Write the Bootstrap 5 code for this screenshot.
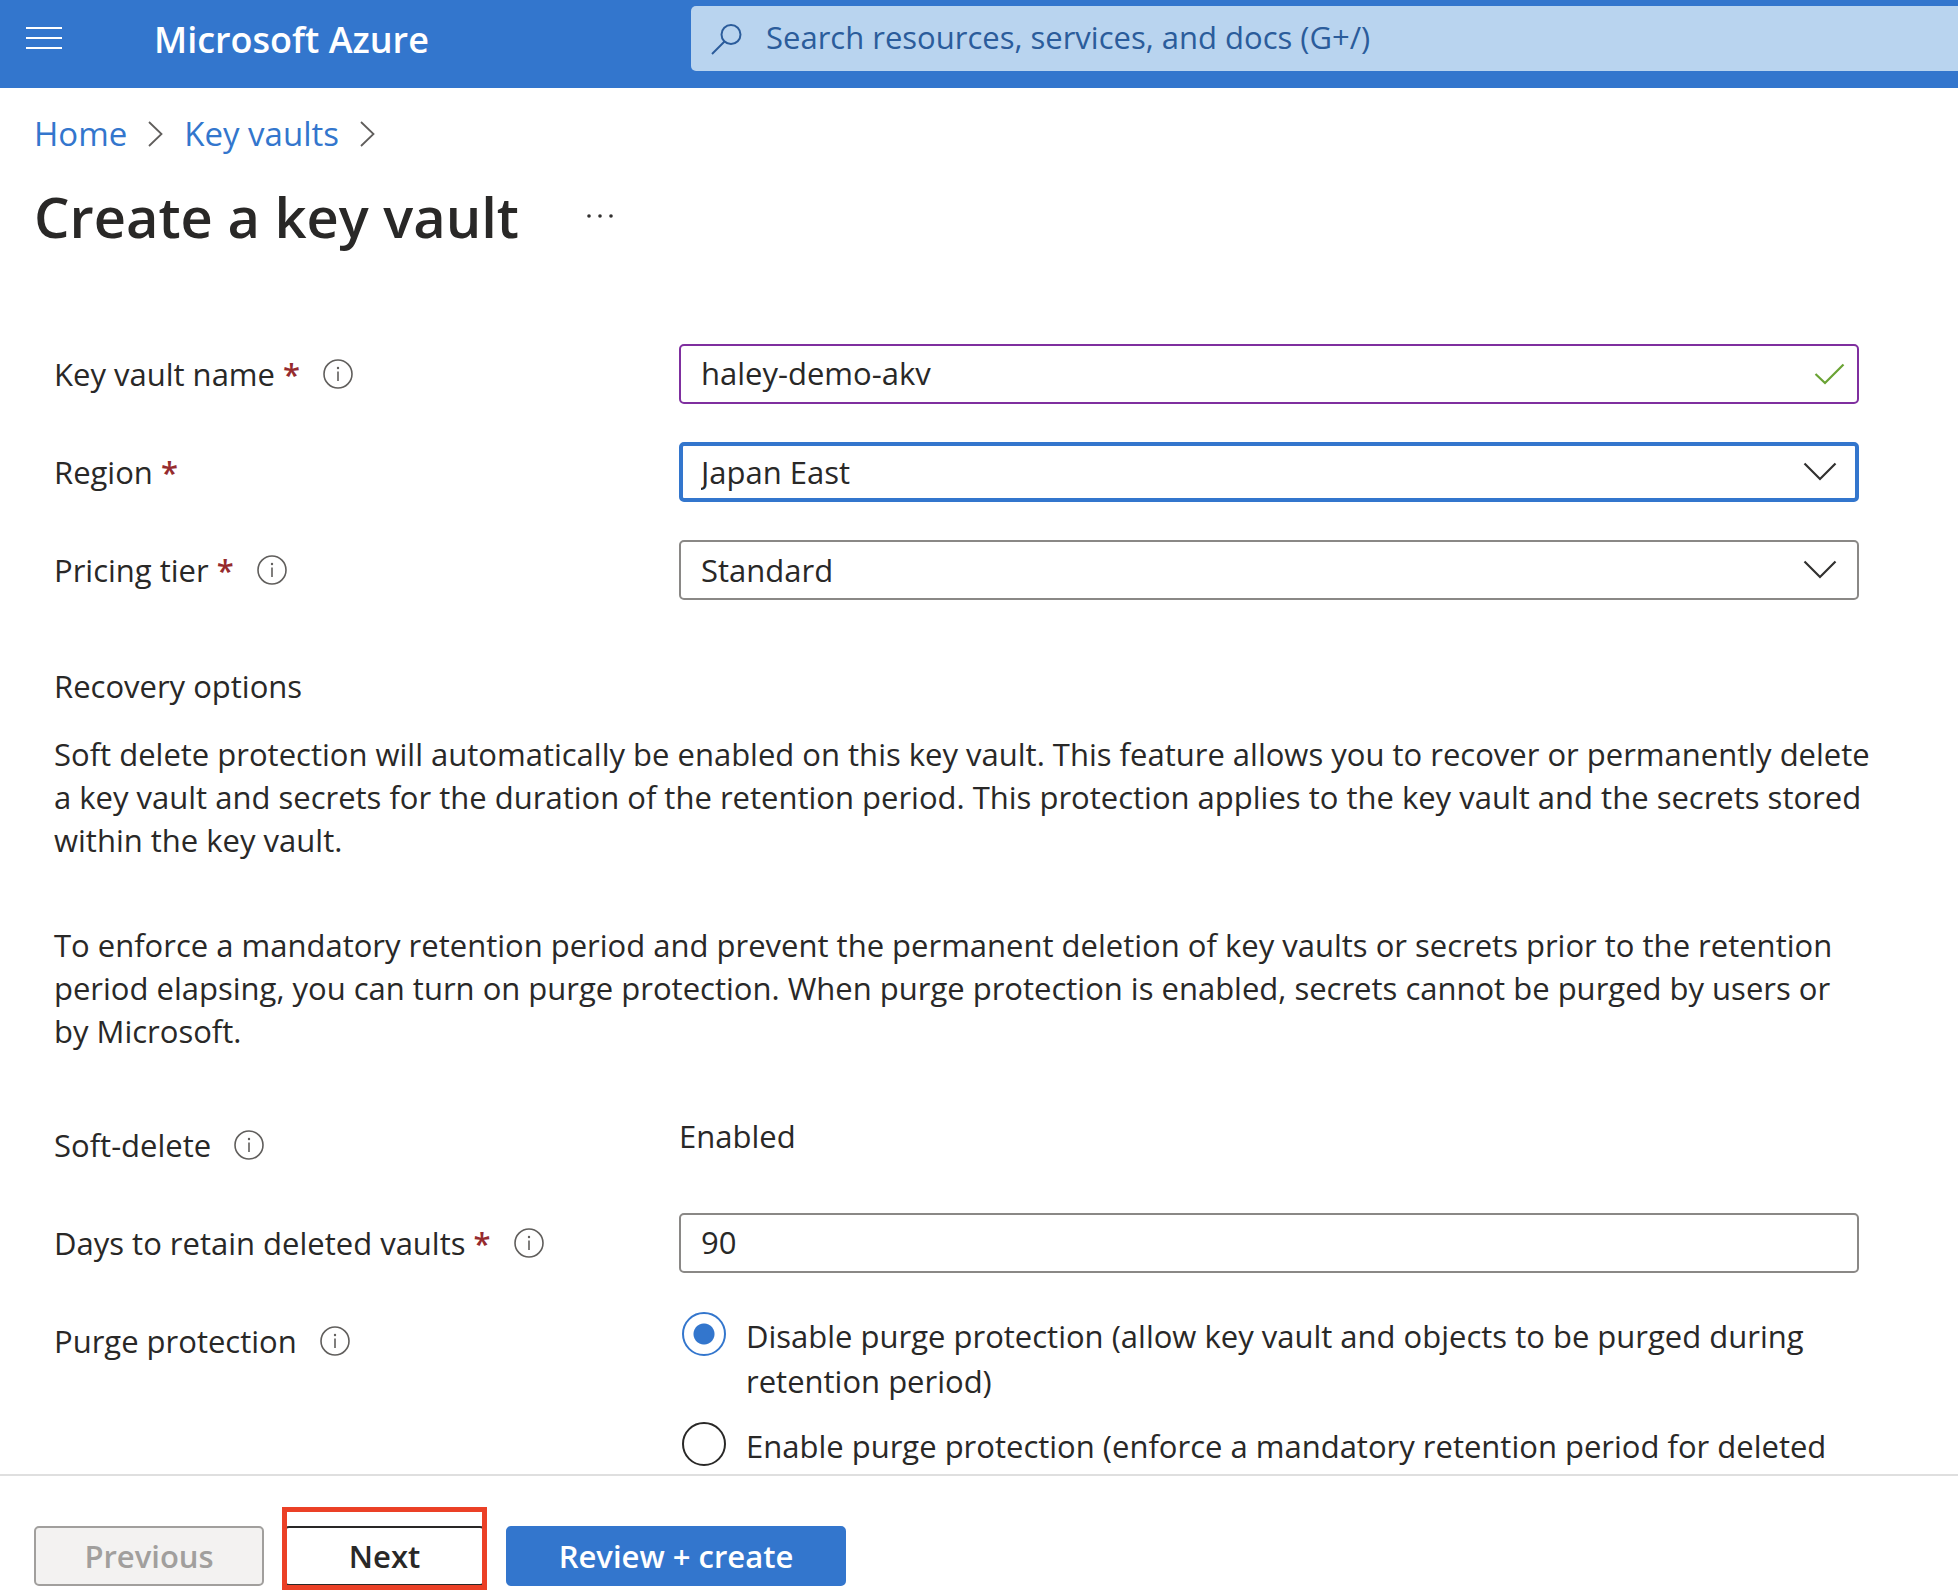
<!DOCTYPE html>
<html lang="en">
<head>
<meta charset="utf-8">
<meta name="viewport" content="width=device-width, initial-scale=1">
<title>Create a key vault - Microsoft Azure</title>
<link href="https://cdn.jsdelivr.net/npm/bootstrap@5.3.0/dist/css/bootstrap.min.css" rel="stylesheet">
<style>
  :root { --az-blue: #3376cd; --az-ink: #292827; --az-line: #8a8886; }
  body { font-family: "Open Sans", "Noto Sans", sans-serif; font-size: 31px; line-height: 43px; color: var(--az-ink); background: #fff; }
  svg { display: block; flex: none; fill: none; }
  .az-top { background: var(--az-blue); height: 88px; }
  .az-lead { width: 691px; padding-left: 26px; gap: 90px; }
  .az-brand, .az-brand:hover { color: #fff; font-size: 36px; font-weight: 600; line-height: 48px; }
  .az-search { background: #b9d4ef; height: 65px; margin-top: 6px; padding-left: 20px; gap: 23px; border-radius: 5px 0 0 5px; color: #2b5c9b; }
  .az-search input { color: #2b5c9b; font-size: 31px; height: 61px; margin-bottom: 3px; outline: 0; }
  .az-search input::placeholder { color: #2b5c9b; opacity: 1; }
  .az-crumbs { padding: 24px 34px 0; gap: 21px; font-size: 33px; line-height: 44px; }
  .az-crumbs a { color: var(--az-blue); text-decoration: none; }
  .az-title { padding: 20px 34px 0; gap: 66px; }
  .az-title h1 { font-size: 56px; font-weight: 600; line-height: 80px; }
  .az-form { padding: 88px 99px 0 54px; }
  .az-row { margin-bottom: 38px; }
  .az-label { width: 625px; gap: 23px; min-height: 60px; }
  .az-star { color: #962b2e; font-weight: 600; }
  .az-box { height: 60px; border: 2px solid var(--az-line); border-radius: 5px; padding: 0 20px; font-size: 31px; line-height: 56px; color: var(--az-ink); background: #fff; }
  input.az-box { padding-bottom: 3px; }
  .az-box.form-control:focus, .az-box.form-select:focus { box-shadow: none; }
  .az-valid { border-color: #7f2f9f; }
  .az-active { border: 4px solid var(--az-blue); padding: 0 18px; line-height: 52px; }
  select.az-box { background-image: none; }
  .az-mark { right: 14px; }
  .az-chevron { right: 22px; }
  .az-recovery { padding-top: 27px; margin-bottom: 25px; line-height: 43px; }
  .az-para { margin: 0 -18px 62px 0; }
  .az-radios { gap: 18px; padding-top: 1px; }
  .az-choice { gap: 20px; padding-left: 3px; line-height: 45px; }
  .az-choice label { padding-top: 2px; }
  .az-choice .form-check-input { width: 44px; height: 44px; flex: none; margin: 0; border: 2px solid #292827; background: #fff; }
  .az-choice .form-check-input:checked { border-color: var(--az-blue); background: radial-gradient(circle, var(--az-blue) 10px, #fff 11px); }
  .az-foot { height: 120px; border-top: 2px solid #dfdfdf; background: #fff; padding: 50px 34px 0; }
  .az-btn { height: 60px; border: 2px solid #292827; border-radius: 5px; padding: 0; font-size: 31px; font-weight: 600; line-height: 52px; }
  .az-prev { width: 230px; margin-right: 20px; }
  .az-prev:disabled { color: #a19f9d; background: #f3f2f1; border-color: #a19f9d; opacity: 1; }
  .az-next { width: 201px; color: #292827; background: #fff; }
  .az-review { width: 340px; margin-left: 21px; color: #fff; background: var(--az-blue); border-color: var(--az-blue); }
  .az-callout { inset: -19px -2px -4px -2px; border: 5px solid #eb4026; pointer-events: none; }
</style>
<script src="https://cdn.jsdelivr.net/npm/bootstrap@5.3.0/dist/js/bootstrap.bundle.min.js" defer></script>
</head>
<body class="vh-100 d-flex flex-column overflow-hidden">

<svg width="0" height="0" class="position-absolute" aria-hidden="true">
  <symbol id="info" viewBox="0 0 30 30">
    <circle cx="15" cy="15" r="14" stroke="#605e5c" stroke-width="1.6"/>
    <path d="M15 12.5v9.5" stroke="#605e5c" stroke-width="1.6"/>
    <circle cx="15" cy="9" r="1.2" fill="#605e5c"/>
  </symbol>
  <symbol id="down" viewBox="0 0 34 20"><path d="M1.5 1.5L17 17 32.500 1.5" stroke="#323130" stroke-width="2.2"/></symbol>
  <symbol id="next" viewBox="0 0 15 26"><path d="M1 1l12.500 12L1 25" stroke="#605e5c" stroke-width="1.800"/></symbol>
</svg>

<header class="az-top d-flex flex-shrink-0">
  <div class="az-lead d-flex align-items-start flex-shrink-0 pt-3">
    <button type="button" class="border-0 bg-transparent p-0 mt-2" aria-label="Show portal menu">
      <svg width="38" height="30" viewBox="0 0 38 30"><path d="M0 4h36M0 14h36M0 24h36" stroke="#fff" stroke-width="2.200"/></svg>
    </button>
    <a href="#" class="az-brand text-decoration-none text-nowrap">Microsoft Azure</a>
  </div>
  <div class="az-search d-flex align-items-center flex-grow-1">
    <svg width="32" height="32" viewBox="0 0 32 32"><circle cx="20" cy="11.500" r="9.500" stroke="#2b5c9b" stroke-width="2"/><path d="M13.500 18.500L1 31" stroke="#2b5c9b" stroke-width="2"/></svg>
    <input type="search" class="border-0 bg-transparent p-0 w-100" aria-label="Search" placeholder="Search resources, services, and docs (G+/)">
  </div>
</header>

<main class="flex-grow-1 overflow-hidden">
  <nav class="az-crumbs d-flex align-items-center" aria-label="Breadcrumb">
    <a href="#">Home</a>
    <svg width="15" height="26"><use href="#next"/></svg>
    <a href="#">Key vaults</a>
    <svg width="15" height="26"><use href="#next"/></svg>
  </nav>
  <div class="az-title d-flex align-items-center">
    <h1 class="m-0">Create a key vault</h1>
    <button type="button" class="border-0 bg-transparent p-0" aria-label="More options">
      <svg width="30" height="6" viewBox="0 0 30 6"><g fill="#323130"><circle cx="4" cy="3" r="1.800"/><circle cx="15" cy="3" r="1.800"/><circle cx="26" cy="3" r="1.800"/></g></svg>
    </button>
  </div>

  <form class="az-form">
    <div class="az-row d-flex">
      <div class="az-label d-flex align-items-center flex-shrink-0">
        <label for="vault">Key vault name <span class="az-star">*</span></label>
        <svg width="30" height="30"><use href="#info"/></svg>
      </div>
      <div class="position-relative flex-grow-1 d-flex align-items-center">
        <input id="vault" type="text" class="form-control az-box az-valid" value="haley-demo-akv">
        <svg class="az-mark position-absolute" width="31" height="22" viewBox="0 0 31 22"><path d="M1.500 11L11 20 29.500 1.500" stroke="#6aa334" stroke-width="2.200"/></svg>
      </div>
    </div>
    <div class="az-row d-flex">
      <div class="az-label d-flex align-items-center flex-shrink-0">
        <label for="region">Region <span class="az-star">*</span></label>
      </div>
      <div class="position-relative flex-grow-1 d-flex align-items-center">
        <select id="region" class="form-select az-box az-active"><option>Japan East</option></select>
        <svg class="az-chevron position-absolute pe-none" width="34" height="20"><use href="#down"/></svg>
      </div>
    </div>
    <div class="az-row d-flex">
      <div class="az-label d-flex align-items-center flex-shrink-0">
        <label for="tier">Pricing tier <span class="az-star">*</span></label>
        <svg width="30" height="30"><use href="#info"/></svg>
      </div>
      <div class="position-relative flex-grow-1 d-flex align-items-center">
        <select id="tier" class="form-select az-box"><option>Standard</option></select>
        <svg class="az-chevron position-absolute pe-none" width="34" height="20"><use href="#down"/></svg>
      </div>
    </div>

    <div class="az-recovery">Recovery options</div>
    <p class="az-para">Soft delete protection will automatically be enabled on this key vault. This feature allows you to recover or permanently delete<br>a key vault and secrets for the duration of the retention period. This protection applies to the key vault and the secrets stored within the key vault.</p>
    <p class="az-para">To enforce a mandatory retention period and prevent the permanent deletion of key vaults or secrets prior to the retention period elapsing, you can turn on purge protection. When purge protection is enabled, secrets cannot be purged by users or<br>by Microsoft.</p>

    <div class="az-row d-flex">
      <div class="az-label d-flex align-items-center flex-shrink-0">
        <span>Soft-delete</span>
        <svg width="30" height="30"><use href="#info"/></svg>
      </div>
      <div class="flex-grow-1">Enabled</div>
    </div>
    <div class="az-row d-flex">
      <div class="az-label d-flex align-items-center flex-shrink-0">
        <label for="days">Days to retain deleted vaults <span class="az-star">*</span></label>
        <svg width="30" height="30"><use href="#info"/></svg>
      </div>
      <div class="flex-grow-1"><input id="days" type="text" class="form-control az-box" value="90"></div>
    </div>
    <div class="d-flex" role="radiogroup" aria-labelledby="purge">
      <div class="az-label d-flex align-items-center align-self-start flex-shrink-0">
        <span id="purge">Purge protection</span>
        <svg width="30" height="30"><use href="#info"/></svg>
      </div>
      <div class="az-radios d-flex flex-column">
        <div class="az-choice d-flex">
          <input class="form-check-input" type="radio" name="purge" id="off" checked>
          <label for="off">Disable purge protection (allow key vault and objects to be purged during retention period)</label>
        </div>
        <div class="az-choice d-flex">
          <input class="form-check-input" type="radio" name="purge" id="on">
          <label for="on">Enable purge protection (enforce a mandatory retention period for deleted</label>
        </div>
      </div>
    </div>
  </form>
</main>

<footer class="az-foot d-flex align-items-start flex-shrink-0">
  <button type="button" class="btn az-btn az-prev" disabled>Previous</button>
  <div class="position-relative d-flex">
    <button type="button" class="btn az-btn az-next">Next</button>
    <span class="az-callout position-absolute"></span>
  </div>
  <button type="button" class="btn az-btn az-review">Review + create</button>
</footer>
</body>
</html>
